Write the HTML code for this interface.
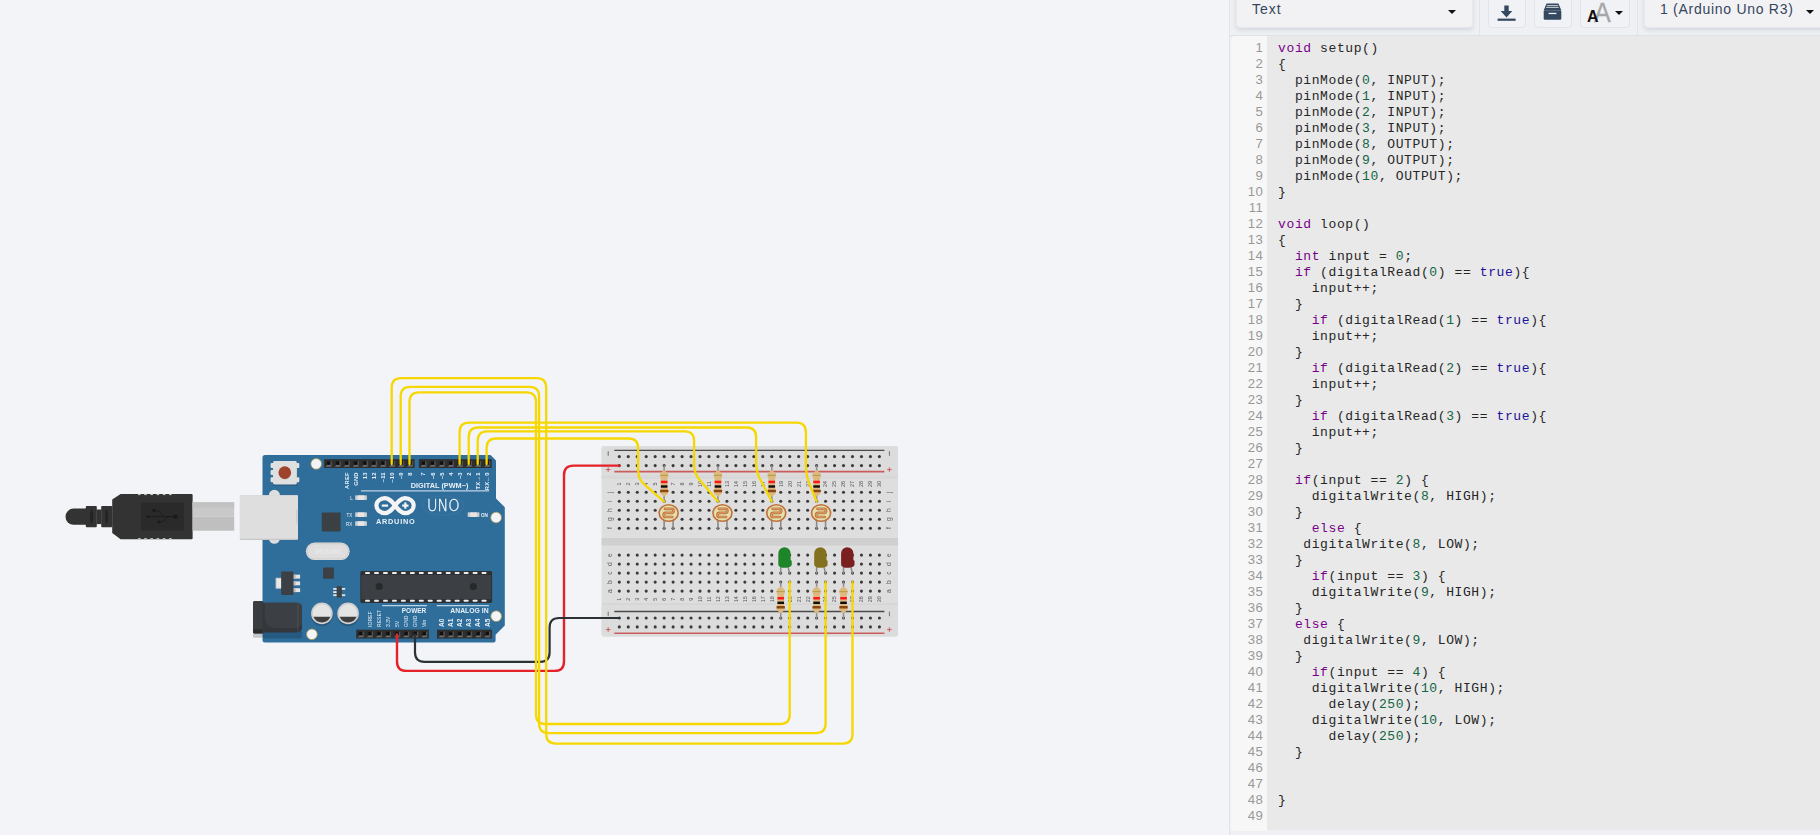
<!DOCTYPE html>
<html><head><meta charset="utf-8"><title>Circuit</title>
<style>
html,body{margin:0;padding:0;}
body{width:1820px;height:835px;overflow:hidden;background:#f3f4f7;position:relative;font-family:"Liberation Sans",sans-serif;}
#cv{position:absolute;left:0;top:0;will-change:transform;}
#panel{position:absolute;left:1229px;top:0;width:591px;height:835px;background:#eff0f3;border-left:1px solid #e1e4ea;box-sizing:border-box;}
#tb{position:absolute;left:0;top:0;width:590px;height:35px;border-bottom:1px solid #dde2e9;}
.dd{position:absolute;top:-12px;height:39.5px;background:#f2f2f5;border:1px solid #e6e8ed;border-radius:4px;box-shadow:0 2px 4px rgba(60,80,110,0.16);box-sizing:border-box;}
.ddt{position:absolute;top:11.2px;font-size:14px;line-height:18px;color:#35465c;white-space:nowrap;letter-spacing:0.4px;}
.car{position:absolute;top:21.3px;width:0;height:0;border-left:4.2px solid transparent;border-right:4.2px solid transparent;border-top:4.4px solid #111;}
.vs{position:absolute;top:0;width:1px;height:35px;background:#e1e5eb;}
.btn{position:absolute;top:-6px;height:34px;border:1px solid #e1e5eb;border-radius:4px;box-sizing:border-box;background:#f1f2f5;}
.btn svg{position:absolute;left:-0.6px;top:5.3px;}
.bigA{position:absolute;left:13px;top:4.7px;font-size:27px;line-height:27px;color:#a6a6a6;-webkit-text-stroke:0.35px #a6a6a6;transform:scaleX(0.93);transform-origin:0 0;}
.smA{position:absolute;left:6px;top:13.8px;font-size:16px;line-height:16px;color:#111;font-weight:bold;}
.btn .car{top:15.8px;}
#ed{position:absolute;left:1px;top:36px;width:589px;height:794px;background:#e9e9e9;}
#gut{position:absolute;left:0;top:0;width:36px;height:795px;background:#f7f7f7;border-radius:4px 0 0 3px;padding-top:4px;box-sizing:border-box;}
#gut div{height:16px;line-height:16px;font-size:13.2px;letter-spacing:0.5px;color:#999;text-align:right;padding-right:3.6px;}
#code{position:absolute;left:47.1px;top:5.2px;margin:0;font-family:"Liberation Mono",monospace;font-size:13px;letter-spacing:0.6px;line-height:16px;color:#262626;}
#code div{height:16px;white-space:pre;}
.k{color:#770088}.n{color:#116644}.a{color:#221199}
</style></head>
<body>
<svg id="cv" width="1229" height="835" viewBox="0 0 1229 835">
<g id="usb">
<path d="M86 508.6H73.6a8.1 8.1 0 0 0 0 16.2H86z" fill="#333"/>
<rect x="85.8" y="505.9" width="11" height="21.4" rx="1" fill="#333"/>
<rect x="96.5" y="509.5" width="5" height="14.6" fill="#333"/>
<rect x="101.2" y="505.9" width="11.2" height="21.4" rx="1" fill="#333"/>
<ellipse cx="91.6" cy="516.6" rx="1.6" ry="7.4" fill="#242424"/>
<ellipse cx="106.6" cy="516.6" rx="1.6" ry="7.4" fill="#242424"/>
<path d="M112.2 499.6L120.6 493.9H191.6a1 1 0 0 1 1 1V538.3a1 1 0 0 1 -1 1H120.6L112.2 533z" fill="#333"/>
<rect x="138" y="493.9" width="2.6" height="1.2" fill="#c4c4c4"/><rect x="138" y="538.1" width="2.6" height="1.2" fill="#c4c4c4"/>
<rect x="144.2" y="493.9" width="2.6" height="1.2" fill="#c4c4c4"/><rect x="144.2" y="538.1" width="2.6" height="1.2" fill="#c4c4c4"/>
<rect x="150.4" y="493.9" width="2.6" height="1.2" fill="#c4c4c4"/><rect x="150.4" y="538.1" width="2.6" height="1.2" fill="#c4c4c4"/>
<rect x="156.6" y="493.9" width="2.6" height="1.2" fill="#c4c4c4"/><rect x="156.6" y="538.1" width="2.6" height="1.2" fill="#c4c4c4"/>
<rect x="162.8" y="493.9" width="2.6" height="1.2" fill="#c4c4c4"/><rect x="162.8" y="538.1" width="2.6" height="1.2" fill="#c4c4c4"/>
<rect x="169" y="493.9" width="2.6" height="1.2" fill="#c4c4c4"/><rect x="169" y="538.1" width="2.6" height="1.2" fill="#c4c4c4"/>
<rect x="141" y="502.6" width="43" height="27.7" fill="#2a2a2a"/>
<g stroke="#1b1b1b" stroke-width="0.9" fill="none"><path d="M148 516.6H174"/><path d="M165.5 516.6C160.5 516.6 161.5 510.5 156 510.5"/><path d="M170.5 516.6C165.5 516.6 166 521.8 160.5 521.8"/></g>
<circle cx="175.4" cy="516.6" r="2.4" fill="#1b1b1b"/><path d="M145.8 516.6l3.6-1.9v3.8z" fill="#1b1b1b"/><rect x="152.6" y="509" width="3" height="3" fill="#1b1b1b"/><circle cx="158.9" cy="521.8" r="1.6" fill="#1b1b1b"/>
<rect x="192.6" y="502.2" width="41.6" height="14.4" fill="#c9c9c9"/><rect x="192.6" y="516.6" width="41.6" height="14.1" fill="#bfbfbf"/>
<rect x="192.6" y="502.2" width="41.6" height="5.4" fill="#c2c2c2"/>
</g>
<path d="M265 455H490.6L496 460.4V498.4L504.8 507.2V625.6L495.6 634.8V640.5a2 2 0 0 1 -2 2H265a2.5 2.5 0 0 1 -2.5 -2.5V457.5a2.5 2.5 0 0 1 2.5 -2.5z" fill="#2f6d9b"/>
<circle cx="316.2" cy="463.9" r="5.4" fill="#f3f4f7" stroke="#a3924d" stroke-width="0.8"/>
<circle cx="496.1" cy="517.5" r="5.4" fill="#f3f4f7" stroke="#a3924d" stroke-width="0.8"/>
<circle cx="496.2" cy="616.2" r="5.4" fill="#f3f4f7" stroke="#a3924d" stroke-width="0.8"/>
<circle cx="311.9" cy="634.3" r="5.4" fill="#f3f4f7" stroke="#a3924d" stroke-width="0.8"/>
<rect x="273.2" y="483" width="23.6" height="2.6" rx="1.2" fill="#24577e"/>
<rect x="270.6" y="462.9" width="3" height="5.1" rx="1" fill="#e3e3e3"/>
<rect x="270.6" y="470" width="3" height="5.1" rx="1" fill="#e3e3e3"/>
<rect x="270.6" y="477.2" width="3" height="5.1" rx="1" fill="#e3e3e3"/>
<rect x="296.3" y="462.9" width="3" height="5.1" rx="1" fill="#e3e3e3"/>
<rect x="296.3" y="477.2" width="3" height="5.1" rx="1" fill="#e3e3e3"/>
<rect x="273" y="461.1" width="23.9" height="23.3" rx="1.6" fill="#dfdfdf"/>
<circle cx="284.8" cy="473.1" r="6.3" fill="#8f8f8f" opacity="0.5"/>
<circle cx="284.8" cy="472.6" r="6.3" fill="#a0432c"/>
<circle cx="274.4" cy="495.4" r="5.6" fill="#dedede"/><circle cx="274.4" cy="538.4" r="5.4" fill="#dedede"/>
<rect x="239.9" y="495.3" width="58.1" height="44.6" rx="0.8" fill="#c6c7c9"/>
<rect x="239.9" y="495.3" width="58.1" height="43.4" rx="0.8" fill="#dedede"/>
<rect x="296.4" y="509.5" width="0.9" height="14" fill="#c4c4c4"/>
<rect x="321.8" y="512.4" width="18.8" height="19" rx="0.8" fill="#3b4045"/>
<rect x="305.9" y="542.6" width="43.8" height="17.4" rx="8.7" fill="#e3e1df"/>
<rect x="307" y="543.7" width="41.6" height="15.2" rx="7.6" fill="#dedede" stroke="#c8c5c2" stroke-width="0.7"/>
<text x="314.7" y="553.8" font-family="Liberation Sans, sans-serif" font-size="7" font-weight="bold" fill="#e9e9e9" textLength="26.2" lengthAdjust="spacingAndGlyphs">SPK16.000G</text>
<rect x="323.1" y="567.6" width="10.8" height="11.1" rx="0.5" fill="#3b4045"/>
<rect x="336.6" y="586.2" width="5.3" height="11.2" rx="0.5" fill="#3b4045"/>
<rect x="333.2" y="588" width="3.4" height="1.8" fill="#e6e6e6"/>
<rect x="333.2" y="591.2" width="3.4" height="1.8" fill="#e6e6e6"/>
<rect x="333.2" y="594.3" width="3.4" height="1.8" fill="#e6e6e6"/>
<rect x="341.9" y="588" width="3.3" height="1.8" fill="#e6e6e6"/>
<rect x="341.9" y="594.3" width="3.3" height="1.8" fill="#e6e6e6"/>
<rect x="275.6" y="577.7" width="6" height="11" rx="0.8" fill="#c9c9c9"/><rect x="276.6" y="578.7" width="4.6" height="9" fill="#e9e9e9"/>
<rect x="293.3" y="574.7" width="6.8" height="3.9" fill="#e4e4e4"/><rect x="293.3" y="574.7" width="2.4" height="3.9" fill="#bdbdbd"/>
<rect x="293.3" y="581.4" width="6.8" height="3.9" fill="#e4e4e4"/><rect x="293.3" y="581.4" width="2.4" height="3.9" fill="#bdbdbd"/>
<rect x="293.3" y="588.2" width="6.8" height="3.9" fill="#e4e4e4"/><rect x="293.3" y="588.2" width="2.4" height="3.9" fill="#bdbdbd"/>
<rect x="281.2" y="571.5" width="12.3" height="23.4" rx="0.6" fill="#3b4045"/>
<rect x="253" y="633.5" width="9.6" height="4.3" rx="1" fill="#c4c6c9"/>
<rect x="262.6" y="630" width="39.3" height="8.4" rx="2" fill="#255a83"/>
<rect x="253" y="601.1" width="10.4" height="32.4" rx="1.4" fill="#3a3d40"/>
<rect x="253" y="629.2" width="10.4" height="4.3" rx="1.2" fill="#2a2c2e"/>
<path d="M262.6 602.8H297a5 5 0 0 1 5 5V627.5a5 5 0 0 1 -5 5H262.6z" fill="#33363a"/>
<path d="M264.8 602.8H297a5 5 0 0 1 5 5V622a6 6 0 0 1 -6 6H274a9.2 9.2 0 0 1 -9.2 -9.2z" fill="#3c4044"/>
<rect x="297.6" y="603" width="0.6" height="29.2" fill="#55595d"/>
<ellipse cx="321.9" cy="616.3" rx="10.6" ry="10" fill="#24577e"/>
<circle cx="321.9" cy="613.4" r="10.8" fill="#cfcfcf"/>
<circle cx="321.9" cy="613.4" r="9.1" fill="#e4e4e4"/>
<path d="M313.45 616.8H330.35A9.1 9.1 0 0 1 313.45 616.8z" fill="#3e3e3e"/>
<ellipse cx="348.1" cy="616.3" rx="10.6" ry="10" fill="#24577e"/>
<circle cx="348.1" cy="613.4" r="10.8" fill="#cfcfcf"/>
<circle cx="348.1" cy="613.4" r="9.1" fill="#e4e4e4"/>
<path d="M339.65 616.8H356.55A9.1 9.1 0 0 1 339.65 616.8z" fill="#3e3e3e"/>
<rect x="324.1" y="459.2" width="90.5" height="8.8" fill="#2f2f2f"/>
<path d="M325.52 466.8L327.12 464.8H330.23L331.73 466.8z" fill="#6c6c6c"/>
<path d="M331.73 460.5L330.23 461.6V464.8L331.73 466.8z" fill="#545454"/>
<path d="M325.52 460.5H331.73L330.23 461.6H327.12V464.8L325.52 466.8z" fill="#292929"/>
<rect x="327.12" y="461.6" width="3.1" height="3.2" fill="#0e0e0e"/>
<path d="M334.57 466.8L336.18 464.8H339.28L340.78 466.8z" fill="#6c6c6c"/>
<path d="M340.78 460.5L339.28 461.6V464.8L340.78 466.8z" fill="#545454"/>
<path d="M334.57 460.5H340.78L339.28 461.6H336.18V464.8L334.57 466.8z" fill="#292929"/>
<rect x="336.18" y="461.6" width="3.1" height="3.2" fill="#0e0e0e"/>
<path d="M343.62 466.8L345.23 464.8H348.33L349.83 466.8z" fill="#6c6c6c"/>
<path d="M349.83 460.5L348.33 461.6V464.8L349.83 466.8z" fill="#545454"/>
<path d="M343.62 460.5H349.83L348.33 461.6H345.23V464.8L343.62 466.8z" fill="#292929"/>
<rect x="345.23" y="461.6" width="3.1" height="3.2" fill="#0e0e0e"/>
<path d="M352.67 466.8L354.27 464.8H357.38L358.88 466.8z" fill="#6c6c6c"/>
<path d="M358.88 460.5L357.38 461.6V464.8L358.88 466.8z" fill="#545454"/>
<path d="M352.67 460.5H358.88L357.38 461.6H354.27V464.8L352.67 466.8z" fill="#292929"/>
<rect x="354.27" y="461.6" width="3.1" height="3.2" fill="#0e0e0e"/>
<path d="M361.72 466.8L363.32 464.8H366.43L367.93 466.8z" fill="#6c6c6c"/>
<path d="M367.93 460.5L366.43 461.6V464.8L367.93 466.8z" fill="#545454"/>
<path d="M361.72 460.5H367.93L366.43 461.6H363.32V464.8L361.72 466.8z" fill="#292929"/>
<rect x="363.32" y="461.6" width="3.1" height="3.2" fill="#0e0e0e"/>
<path d="M370.77 466.8L372.38 464.8H375.48L376.98 466.8z" fill="#6c6c6c"/>
<path d="M376.98 460.5L375.48 461.6V464.8L376.98 466.8z" fill="#545454"/>
<path d="M370.77 460.5H376.98L375.48 461.6H372.38V464.8L370.77 466.8z" fill="#292929"/>
<rect x="372.38" y="461.6" width="3.1" height="3.2" fill="#0e0e0e"/>
<path d="M379.82 466.8L381.43 464.8H384.53L386.03 466.8z" fill="#6c6c6c"/>
<path d="M386.03 460.5L384.53 461.6V464.8L386.03 466.8z" fill="#545454"/>
<path d="M379.82 460.5H386.03L384.53 461.6H381.43V464.8L379.82 466.8z" fill="#292929"/>
<rect x="381.43" y="461.6" width="3.1" height="3.2" fill="#0e0e0e"/>
<path d="M388.88 466.8L390.48 464.8H393.58L395.08 466.8z" fill="#6c6c6c"/>
<path d="M395.08 460.5L393.58 461.6V464.8L395.08 466.8z" fill="#545454"/>
<path d="M388.88 460.5H395.08L393.58 461.6H390.48V464.8L388.88 466.8z" fill="#292929"/>
<rect x="390.48" y="461.6" width="3.1" height="3.2" fill="#0e0e0e"/>
<path d="M397.92 466.8L399.52 464.8H402.62L404.12 466.8z" fill="#6c6c6c"/>
<path d="M404.12 460.5L402.62 461.6V464.8L404.12 466.8z" fill="#545454"/>
<path d="M397.92 460.5H404.12L402.62 461.6H399.52V464.8L397.92 466.8z" fill="#292929"/>
<rect x="399.52" y="461.6" width="3.1" height="3.2" fill="#0e0e0e"/>
<path d="M406.97 466.8L408.57 464.8H411.68L413.18 466.8z" fill="#6c6c6c"/>
<path d="M413.18 460.5L411.68 461.6V464.8L413.18 466.8z" fill="#545454"/>
<path d="M406.97 460.5H413.18L411.68 461.6H408.57V464.8L406.97 466.8z" fill="#292929"/>
<rect x="408.57" y="461.6" width="3.1" height="3.2" fill="#0e0e0e"/>
<rect x="418.9" y="459.2" width="72.8" height="8.8" fill="#2f2f2f"/>
<path d="M420.35 466.8L421.95 464.8H425.05L426.55 466.8z" fill="#6c6c6c"/>
<path d="M426.55 460.5L425.05 461.6V464.8L426.55 466.8z" fill="#545454"/>
<path d="M420.35 460.5H426.55L425.05 461.6H421.95V464.8L420.35 466.8z" fill="#292929"/>
<rect x="421.95" y="461.6" width="3.1" height="3.2" fill="#0e0e0e"/>
<path d="M429.45 466.8L431.05 464.8H434.15L435.65 466.8z" fill="#6c6c6c"/>
<path d="M435.65 460.5L434.15 461.6V464.8L435.65 466.8z" fill="#545454"/>
<path d="M429.45 460.5H435.65L434.15 461.6H431.05V464.8L429.45 466.8z" fill="#292929"/>
<rect x="431.05" y="461.6" width="3.1" height="3.2" fill="#0e0e0e"/>
<path d="M438.55 466.8L440.15 464.8H443.25L444.75 466.8z" fill="#6c6c6c"/>
<path d="M444.75 460.5L443.25 461.6V464.8L444.75 466.8z" fill="#545454"/>
<path d="M438.55 460.5H444.75L443.25 461.6H440.15V464.8L438.55 466.8z" fill="#292929"/>
<rect x="440.15" y="461.6" width="3.1" height="3.2" fill="#0e0e0e"/>
<path d="M447.65 466.8L449.25 464.8H452.35L453.85 466.8z" fill="#6c6c6c"/>
<path d="M453.85 460.5L452.35 461.6V464.8L453.85 466.8z" fill="#545454"/>
<path d="M447.65 460.5H453.85L452.35 461.6H449.25V464.8L447.65 466.8z" fill="#292929"/>
<rect x="449.25" y="461.6" width="3.1" height="3.2" fill="#0e0e0e"/>
<path d="M456.75 466.8L458.35 464.8H461.45L462.95 466.8z" fill="#6c6c6c"/>
<path d="M462.95 460.5L461.45 461.6V464.8L462.95 466.8z" fill="#545454"/>
<path d="M456.75 460.5H462.95L461.45 461.6H458.35V464.8L456.75 466.8z" fill="#292929"/>
<rect x="458.35" y="461.6" width="3.1" height="3.2" fill="#0e0e0e"/>
<path d="M465.85 466.8L467.45 464.8H470.55L472.05 466.8z" fill="#6c6c6c"/>
<path d="M472.05 460.5L470.55 461.6V464.8L472.05 466.8z" fill="#545454"/>
<path d="M465.85 460.5H472.05L470.55 461.6H467.45V464.8L465.85 466.8z" fill="#292929"/>
<rect x="467.45" y="461.6" width="3.1" height="3.2" fill="#0e0e0e"/>
<path d="M474.95 466.8L476.55 464.8H479.65L481.15 466.8z" fill="#6c6c6c"/>
<path d="M481.15 460.5L479.65 461.6V464.8L481.15 466.8z" fill="#545454"/>
<path d="M474.95 460.5H481.15L479.65 461.6H476.55V464.8L474.95 466.8z" fill="#292929"/>
<rect x="476.55" y="461.6" width="3.1" height="3.2" fill="#0e0e0e"/>
<path d="M484.05 466.8L485.65 464.8H488.75L490.25 466.8z" fill="#6c6c6c"/>
<path d="M490.25 460.5L488.75 461.6V464.8L490.25 466.8z" fill="#545454"/>
<path d="M484.05 460.5H490.25L488.75 461.6H485.65V464.8L484.05 466.8z" fill="#292929"/>
<rect x="485.65" y="461.6" width="3.1" height="3.2" fill="#0e0e0e"/>
<rect x="356.2" y="629.7" width="72.64" height="8.8" fill="#2f2f2f"/>
<path d="M357.64 637.3L359.24 635.3H362.34L363.84 637.3z" fill="#6c6c6c"/>
<path d="M363.84 631L362.34 632.1V635.3L363.84 637.3z" fill="#545454"/>
<path d="M357.64 631H363.84L362.34 632.1H359.24V635.3L357.64 637.3z" fill="#292929"/>
<rect x="359.24" y="632.1" width="3.1" height="3.2" fill="#0e0e0e"/>
<path d="M366.72 637.3L368.32 635.3H371.42L372.92 637.3z" fill="#6c6c6c"/>
<path d="M372.92 631L371.42 632.1V635.3L372.92 637.3z" fill="#545454"/>
<path d="M366.72 631H372.92L371.42 632.1H368.32V635.3L366.72 637.3z" fill="#292929"/>
<rect x="368.32" y="632.1" width="3.1" height="3.2" fill="#0e0e0e"/>
<path d="M375.8 637.3L377.4 635.3H380.5L382 637.3z" fill="#6c6c6c"/>
<path d="M382 631L380.5 632.1V635.3L382 637.3z" fill="#545454"/>
<path d="M375.8 631H382L380.5 632.1H377.4V635.3L375.8 637.3z" fill="#292929"/>
<rect x="377.4" y="632.1" width="3.1" height="3.2" fill="#0e0e0e"/>
<path d="M384.88 637.3L386.48 635.3H389.58L391.08 637.3z" fill="#6c6c6c"/>
<path d="M391.08 631L389.58 632.1V635.3L391.08 637.3z" fill="#545454"/>
<path d="M384.88 631H391.08L389.58 632.1H386.48V635.3L384.88 637.3z" fill="#292929"/>
<rect x="386.48" y="632.1" width="3.1" height="3.2" fill="#0e0e0e"/>
<path d="M393.96 637.3L395.56 635.3H398.66L400.16 637.3z" fill="#6c6c6c"/>
<path d="M400.16 631L398.66 632.1V635.3L400.16 637.3z" fill="#545454"/>
<path d="M393.96 631H400.16L398.66 632.1H395.56V635.3L393.96 637.3z" fill="#292929"/>
<rect x="395.56" y="632.1" width="3.1" height="3.2" fill="#0e0e0e"/>
<path d="M403.04 637.3L404.64 635.3H407.74L409.24 637.3z" fill="#6c6c6c"/>
<path d="M409.24 631L407.74 632.1V635.3L409.24 637.3z" fill="#545454"/>
<path d="M403.04 631H409.24L407.74 632.1H404.64V635.3L403.04 637.3z" fill="#292929"/>
<rect x="404.64" y="632.1" width="3.1" height="3.2" fill="#0e0e0e"/>
<path d="M412.12 637.3L413.72 635.3H416.82L418.32 637.3z" fill="#6c6c6c"/>
<path d="M418.32 631L416.82 632.1V635.3L418.32 637.3z" fill="#545454"/>
<path d="M412.12 631H418.32L416.82 632.1H413.72V635.3L412.12 637.3z" fill="#292929"/>
<rect x="413.72" y="632.1" width="3.1" height="3.2" fill="#0e0e0e"/>
<path d="M421.2 637.3L422.8 635.3H425.9L427.4 637.3z" fill="#6c6c6c"/>
<path d="M427.4 631L425.9 632.1V635.3L427.4 637.3z" fill="#545454"/>
<path d="M421.2 631H427.4L425.9 632.1H422.8V635.3L421.2 637.3z" fill="#292929"/>
<rect x="422.8" y="632.1" width="3.1" height="3.2" fill="#0e0e0e"/>
<rect x="437" y="629.7" width="54.9" height="8.8" fill="#2f2f2f"/>
<path d="M438.47 637.3L440.07 635.3H443.18L444.68 637.3z" fill="#6c6c6c"/>
<path d="M444.68 631L443.18 632.1V635.3L444.68 637.3z" fill="#545454"/>
<path d="M438.47 631H444.68L443.18 632.1H440.07V635.3L438.47 637.3z" fill="#292929"/>
<rect x="440.07" y="632.1" width="3.1" height="3.2" fill="#0e0e0e"/>
<path d="M447.62 637.3L449.22 635.3H452.32L453.82 637.3z" fill="#6c6c6c"/>
<path d="M453.82 631L452.32 632.1V635.3L453.82 637.3z" fill="#545454"/>
<path d="M447.62 631H453.82L452.32 632.1H449.22V635.3L447.62 637.3z" fill="#292929"/>
<rect x="449.22" y="632.1" width="3.1" height="3.2" fill="#0e0e0e"/>
<path d="M456.77 637.3L458.38 635.3H461.48L462.98 637.3z" fill="#6c6c6c"/>
<path d="M462.98 631L461.48 632.1V635.3L462.98 637.3z" fill="#545454"/>
<path d="M456.77 631H462.98L461.48 632.1H458.38V635.3L456.77 637.3z" fill="#292929"/>
<rect x="458.38" y="632.1" width="3.1" height="3.2" fill="#0e0e0e"/>
<path d="M465.92 637.3L467.52 635.3H470.62L472.12 637.3z" fill="#6c6c6c"/>
<path d="M472.12 631L470.62 632.1V635.3L472.12 637.3z" fill="#545454"/>
<path d="M465.92 631H472.12L470.62 632.1H467.52V635.3L465.92 637.3z" fill="#292929"/>
<rect x="467.52" y="632.1" width="3.1" height="3.2" fill="#0e0e0e"/>
<path d="M475.07 637.3L476.68 635.3H479.78L481.28 637.3z" fill="#6c6c6c"/>
<path d="M481.28 631L479.78 632.1V635.3L481.28 637.3z" fill="#545454"/>
<path d="M475.07 631H481.28L479.78 632.1H476.68V635.3L475.07 637.3z" fill="#292929"/>
<rect x="476.68" y="632.1" width="3.1" height="3.2" fill="#0e0e0e"/>
<path d="M484.22 637.3L485.82 635.3H488.93L490.43 637.3z" fill="#6c6c6c"/>
<path d="M490.43 631L488.93 632.1V635.3L490.43 637.3z" fill="#545454"/>
<path d="M484.22 631H490.43L488.93 632.1H485.82V635.3L484.22 637.3z" fill="#292929"/>
<rect x="485.82" y="632.1" width="3.1" height="3.2" fill="#0e0e0e"/>
<rect x="360.3" y="571.1" width="131.8" height="31.8" rx="1.6" fill="#2e3134"/>
<rect x="361.4" y="575" width="129.6" height="24" fill="#3c4044"/>
<rect x="365.2" y="572.1" width="4.6" height="2" rx="0.4" fill="#ededed"/><rect x="365.2" y="599.8" width="4.6" height="2" rx="0.4" fill="#ededed"/>
<rect x="374.16" y="572.1" width="4.6" height="2" rx="0.4" fill="#ededed"/><rect x="374.16" y="599.8" width="4.6" height="2" rx="0.4" fill="#ededed"/>
<rect x="383.13" y="572.1" width="4.6" height="2" rx="0.4" fill="#ededed"/><rect x="383.13" y="599.8" width="4.6" height="2" rx="0.4" fill="#ededed"/>
<rect x="392.09" y="572.1" width="4.6" height="2" rx="0.4" fill="#ededed"/><rect x="392.09" y="599.8" width="4.6" height="2" rx="0.4" fill="#ededed"/>
<rect x="401.06" y="572.1" width="4.6" height="2" rx="0.4" fill="#ededed"/><rect x="401.06" y="599.8" width="4.6" height="2" rx="0.4" fill="#ededed"/>
<rect x="410.02" y="572.1" width="4.6" height="2" rx="0.4" fill="#ededed"/><rect x="410.02" y="599.8" width="4.6" height="2" rx="0.4" fill="#ededed"/>
<rect x="418.99" y="572.1" width="4.6" height="2" rx="0.4" fill="#ededed"/><rect x="418.99" y="599.8" width="4.6" height="2" rx="0.4" fill="#ededed"/>
<rect x="427.95" y="572.1" width="4.6" height="2" rx="0.4" fill="#ededed"/><rect x="427.95" y="599.8" width="4.6" height="2" rx="0.4" fill="#ededed"/>
<rect x="436.92" y="572.1" width="4.6" height="2" rx="0.4" fill="#ededed"/><rect x="436.92" y="599.8" width="4.6" height="2" rx="0.4" fill="#ededed"/>
<rect x="445.88" y="572.1" width="4.6" height="2" rx="0.4" fill="#ededed"/><rect x="445.88" y="599.8" width="4.6" height="2" rx="0.4" fill="#ededed"/>
<rect x="454.85" y="572.1" width="4.6" height="2" rx="0.4" fill="#ededed"/><rect x="454.85" y="599.8" width="4.6" height="2" rx="0.4" fill="#ededed"/>
<rect x="463.81" y="572.1" width="4.6" height="2" rx="0.4" fill="#ededed"/><rect x="463.81" y="599.8" width="4.6" height="2" rx="0.4" fill="#ededed"/>
<rect x="472.78" y="572.1" width="4.6" height="2" rx="0.4" fill="#ededed"/><rect x="472.78" y="599.8" width="4.6" height="2" rx="0.4" fill="#ededed"/>
<rect x="481.75" y="572.1" width="4.6" height="2" rx="0.4" fill="#ededed"/><rect x="481.75" y="599.8" width="4.6" height="2" rx="0.4" fill="#ededed"/>
<circle cx="379.2" cy="586.5" r="3.6" fill="#26282a"/><circle cx="473.3" cy="586.5" r="3.6" fill="#26282a"/>
<rect x="355.2" y="495.4" width="11.7" height="4.5" fill="#cfcfcf"/><rect x="357.8" y="495.4" width="6.5" height="4.5" fill="#e6e6e6"/>
<rect x="355.2" y="512.4" width="11.7" height="4.5" fill="#cfcfcf"/><rect x="357.8" y="512.4" width="6.5" height="4.5" fill="#e6e6e6"/>
<rect x="355.2" y="521.3" width="11.7" height="4.5" fill="#cfcfcf"/><rect x="357.8" y="521.3" width="6.5" height="4.5" fill="#e6e6e6"/>
<rect x="467.7" y="512.4" width="11.7" height="4.5" fill="#cfcfcf"/><rect x="470.3" y="512.4" width="6.5" height="4.5" fill="#e6e6e6"/>
<g font-family="Liberation Sans, sans-serif" fill="#e8f0f6">
<text x="352.8" y="499.6" font-size="4.6" text-anchor="end">L</text>
<text x="352.4" y="516.6" font-size="4.6" text-anchor="end">TX</text>
<text x="352.4" y="525.6" font-size="4.6" text-anchor="end">RX</text>
<text x="481" y="516.6" font-size="4.6" font-weight="bold">ON</text>
<text x="410.8" y="487.7" font-size="6.8" font-weight="bold" textLength="57.6" lengthAdjust="spacingAndGlyphs">DIGITAL (PWM~)</text>
<text x="401.8" y="613.1" font-size="6.8" font-weight="bold" textLength="24.5" lengthAdjust="spacingAndGlyphs">POWER</text>
<text x="450.3" y="613.1" font-size="6.8" font-weight="bold" textLength="38.3" lengthAdjust="spacingAndGlyphs">ANALOG IN</text>
<text x="375.9" y="523.7" font-size="7.3" font-weight="bold" textLength="38.8" lengthAdjust="spacing">ARDUINO</text>
</g>
<text x="426.9" y="511.4" font-family="DejaVu Sans Light, DejaVu Sans, Liberation Sans, sans-serif" font-weight="200" font-size="15.8" fill="#f4f7fa" stroke="#f4f7fa" stroke-width="0.35" textLength="32.7" lengthAdjust="spacingAndGlyphs">UNO</text>
<ellipse cx="442.9" cy="505.6" rx="20.8" ry="9.6" fill="none" stroke="#5f8fb5" stroke-width="0.5" stroke-dasharray="1 1"/>
<g stroke="#bfd3e3" stroke-width="1.3"><path d="M361 490.8H489.1"/><path d="M382.2 605.6H426.9"/><path d="M436.7 605.6H488.9"/></g>
<path d="M395.05 505.5C392 501.5 389.4 498.1 385 498.1C380.2 498.1 376.4 501.4 376.4 505.5C376.4 509.6 380.2 513.1 385 513.1C389.4 513.1 392 509.5 395.05 505.5C398.1 501.5 400.7 498.1 405.1 498.1C409.9 498.1 413.7 501.4 413.7 505.5C413.7 509.6 409.9 513.1 405.1 513.1C400.7 513.1 398.1 509.5 395.05 505.5z" fill="none" stroke="#f4f4f4" stroke-width="4.2"/>
<rect x="381.8" y="504.5" width="6.3" height="2.2" fill="#f4f4f4"/><rect x="402.2" y="504.5" width="6.3" height="2.2" fill="#f4f4f4"/><rect x="404.25" y="502.4" width="2.2" height="6.3" fill="#f4f4f4"/>
<g font-family="Liberation Sans, sans-serif" fill="#e8f0f6" font-size="5.8" font-weight="bold" letter-spacing="0.2">
<text transform="translate(348.7 472.3) rotate(-90)" text-anchor="end">AREF</text>
<text transform="translate(357.75 472.3) rotate(-90)" text-anchor="end">GND</text>
<text transform="translate(366.8 472.3) rotate(-90)" text-anchor="end">13</text>
<text transform="translate(375.85 472.3) rotate(-90)" text-anchor="end">12</text>
<text transform="translate(384.9 472.3) rotate(-90)" text-anchor="end">~11</text>
<text transform="translate(393.95 472.3) rotate(-90)" text-anchor="end">~10</text>
<text transform="translate(403 472.3) rotate(-90)" text-anchor="end">~9</text>
<text transform="translate(412.05 472.3) rotate(-90)" text-anchor="end">8</text>
<text transform="translate(425.45 472.3) rotate(-90)" text-anchor="end">7</text>
<text transform="translate(434.55 472.3) rotate(-90)" text-anchor="end">~6</text>
<text transform="translate(443.65 472.3) rotate(-90)" text-anchor="end">~5</text>
<text transform="translate(452.75 472.3) rotate(-90)" text-anchor="end">4</text>
<text transform="translate(461.85 472.3) rotate(-90)" text-anchor="end">~3</text>
<text transform="translate(470.95 472.3) rotate(-90)" text-anchor="end">2</text>
<text transform="translate(480.05 472.3) rotate(-90)" text-anchor="end" font-weight="bold">TX→1</text>
<text transform="translate(489.15 472.3) rotate(-90)" text-anchor="end" font-weight="bold">RX←0</text>
</g>
<g font-family="Liberation Sans, sans-serif" fill="#e8f0f6" font-size="5.1">
<text transform="translate(371.62 627) rotate(-90)">IOREF</text>
<text transform="translate(380.7 627) rotate(-90)">RESET</text>
<text transform="translate(389.78 627) rotate(-90)">3.3V</text>
<text transform="translate(398.86 627) rotate(-90)">5V</text>
<text transform="translate(407.94 627) rotate(-90)">GND</text>
<text transform="translate(417.02 627) rotate(-90)">GND</text>
<text transform="translate(426.1 627) rotate(-90)">Vin</text>
</g>
<g font-family="Liberation Sans, sans-serif" fill="#e8f0f6" font-size="6.5" font-weight="bold">
<text transform="translate(443.87 627) rotate(-90)">A0</text>
<text transform="translate(453.02 627) rotate(-90)">A1</text>
<text transform="translate(462.17 627) rotate(-90)">A2</text>
<text transform="translate(471.32 627) rotate(-90)">A3</text>
<text transform="translate(480.47 627) rotate(-90)">A4</text>
<text transform="translate(489.62 627) rotate(-90)">A5</text>
</g>
<rect x="601.6" y="446.2" width="296.4" height="190.3" rx="2" fill="#dedede"/>
<rect x="601.6" y="446.2" width="296.4" height="32" rx="2" fill="#dcdcdc"/>
<rect x="601.6" y="475.6" width="296.4" height="3.4" fill="#d8d8d8"/>
<rect x="601.6" y="538" width="296.4" height="7.6" fill="#cfcfcf"/>
<rect x="601.6" y="603.4" width="296.4" height="1.4" fill="#d3d3d3"/>
<rect x="601.6" y="604.8" width="296.4" height="31.7" rx="2" fill="#dcdcdc"/>
<g stroke-width="1.3"><path d="M614.3 450.4H884.4" stroke="#4a4a4a"/><path d="M614.3 471.6H884.4" stroke="#cb5c5c" stroke-width="1.6"/><path d="M614.3 611.5H884.4" stroke="#4a4a4a"/><path d="M614.3 633.3H884.4" stroke="#cb5c5c" stroke-width="1.6"/></g>
<path d="M608.2 451.2V455.8M608.2 611.6V616.2" stroke="#555" stroke-width="0.8"/>
<path d="M605.9000000000001 469.6H610.5M608.2 467.3V471.9M605.9000000000001 629.6H610.5M608.2 627.3V631.9" stroke="#cc4444" stroke-width="0.8"/>
<path d="M889.4 451.2V455.8M889.4 611.6V616.2" stroke="#555" stroke-width="0.8"/>
<path d="M887.1 469.6H891.6999999999999M889.4 467.3V471.9M887.1 629.6H891.6999999999999M889.4 627.3V631.9" stroke="#cc4444" stroke-width="0.8"/>
<g fill="#3a3a3a">
<circle cx="619.3" cy="456.6" r="1.55"/>
<circle cx="628.27" cy="456.6" r="1.55"/>
<circle cx="637.24" cy="456.6" r="1.55"/>
<circle cx="646.21" cy="456.6" r="1.55"/>
<circle cx="655.18" cy="456.6" r="1.55"/>
<circle cx="664.14" cy="456.6" r="1.55"/>
<circle cx="673.11" cy="456.6" r="1.55"/>
<circle cx="682.08" cy="456.6" r="1.55"/>
<circle cx="691.05" cy="456.6" r="1.55"/>
<circle cx="700.02" cy="456.6" r="1.55"/>
<circle cx="708.99" cy="456.6" r="1.55"/>
<circle cx="717.96" cy="456.6" r="1.55"/>
<circle cx="726.93" cy="456.6" r="1.55"/>
<circle cx="735.9" cy="456.6" r="1.55"/>
<circle cx="744.87" cy="456.6" r="1.55"/>
<circle cx="753.83" cy="456.6" r="1.55"/>
<circle cx="762.8" cy="456.6" r="1.55"/>
<circle cx="771.77" cy="456.6" r="1.55"/>
<circle cx="780.74" cy="456.6" r="1.55"/>
<circle cx="789.71" cy="456.6" r="1.55"/>
<circle cx="798.68" cy="456.6" r="1.55"/>
<circle cx="807.65" cy="456.6" r="1.55"/>
<circle cx="816.62" cy="456.6" r="1.55"/>
<circle cx="825.59" cy="456.6" r="1.55"/>
<circle cx="834.56" cy="456.6" r="1.55"/>
<circle cx="843.52" cy="456.6" r="1.55"/>
<circle cx="852.49" cy="456.6" r="1.55"/>
<circle cx="861.46" cy="456.6" r="1.55"/>
<circle cx="870.43" cy="456.6" r="1.55"/>
<circle cx="879.4" cy="456.6" r="1.55"/>
<circle cx="619.3" cy="465.6" r="1.55"/>
<circle cx="628.27" cy="465.6" r="1.55"/>
<circle cx="637.24" cy="465.6" r="1.55"/>
<circle cx="646.21" cy="465.6" r="1.55"/>
<circle cx="655.18" cy="465.6" r="1.55"/>
<circle cx="664.14" cy="465.6" r="1.55"/>
<circle cx="673.11" cy="465.6" r="1.55"/>
<circle cx="682.08" cy="465.6" r="1.55"/>
<circle cx="691.05" cy="465.6" r="1.55"/>
<circle cx="700.02" cy="465.6" r="1.55"/>
<circle cx="708.99" cy="465.6" r="1.55"/>
<circle cx="717.96" cy="465.6" r="1.55"/>
<circle cx="726.93" cy="465.6" r="1.55"/>
<circle cx="735.9" cy="465.6" r="1.55"/>
<circle cx="744.87" cy="465.6" r="1.55"/>
<circle cx="753.83" cy="465.6" r="1.55"/>
<circle cx="762.8" cy="465.6" r="1.55"/>
<circle cx="771.77" cy="465.6" r="1.55"/>
<circle cx="780.74" cy="465.6" r="1.55"/>
<circle cx="789.71" cy="465.6" r="1.55"/>
<circle cx="798.68" cy="465.6" r="1.55"/>
<circle cx="807.65" cy="465.6" r="1.55"/>
<circle cx="816.62" cy="465.6" r="1.55"/>
<circle cx="825.59" cy="465.6" r="1.55"/>
<circle cx="834.56" cy="465.6" r="1.55"/>
<circle cx="843.52" cy="465.6" r="1.55"/>
<circle cx="852.49" cy="465.6" r="1.55"/>
<circle cx="861.46" cy="465.6" r="1.55"/>
<circle cx="870.43" cy="465.6" r="1.55"/>
<circle cx="879.4" cy="465.6" r="1.55"/>
<circle cx="619.3" cy="492.3" r="1.55"/>
<circle cx="628.27" cy="492.3" r="1.55"/>
<circle cx="637.24" cy="492.3" r="1.55"/>
<circle cx="646.21" cy="492.3" r="1.55"/>
<circle cx="655.18" cy="492.3" r="1.55"/>
<circle cx="664.14" cy="492.3" r="1.55"/>
<circle cx="673.11" cy="492.3" r="1.55"/>
<circle cx="682.08" cy="492.3" r="1.55"/>
<circle cx="691.05" cy="492.3" r="1.55"/>
<circle cx="700.02" cy="492.3" r="1.55"/>
<circle cx="708.99" cy="492.3" r="1.55"/>
<circle cx="717.96" cy="492.3" r="1.55"/>
<circle cx="726.93" cy="492.3" r="1.55"/>
<circle cx="735.9" cy="492.3" r="1.55"/>
<circle cx="744.87" cy="492.3" r="1.55"/>
<circle cx="753.83" cy="492.3" r="1.55"/>
<circle cx="762.8" cy="492.3" r="1.55"/>
<circle cx="771.77" cy="492.3" r="1.55"/>
<circle cx="780.74" cy="492.3" r="1.55"/>
<circle cx="789.71" cy="492.3" r="1.55"/>
<circle cx="798.68" cy="492.3" r="1.55"/>
<circle cx="807.65" cy="492.3" r="1.55"/>
<circle cx="816.62" cy="492.3" r="1.55"/>
<circle cx="825.59" cy="492.3" r="1.55"/>
<circle cx="834.56" cy="492.3" r="1.55"/>
<circle cx="843.52" cy="492.3" r="1.55"/>
<circle cx="852.49" cy="492.3" r="1.55"/>
<circle cx="861.46" cy="492.3" r="1.55"/>
<circle cx="870.43" cy="492.3" r="1.55"/>
<circle cx="879.4" cy="492.3" r="1.55"/>
<circle cx="619.3" cy="501.3" r="1.55"/>
<circle cx="628.27" cy="501.3" r="1.55"/>
<circle cx="637.24" cy="501.3" r="1.55"/>
<circle cx="646.21" cy="501.3" r="1.55"/>
<circle cx="655.18" cy="501.3" r="1.55"/>
<circle cx="664.14" cy="501.3" r="1.55"/>
<circle cx="673.11" cy="501.3" r="1.55"/>
<circle cx="682.08" cy="501.3" r="1.55"/>
<circle cx="691.05" cy="501.3" r="1.55"/>
<circle cx="700.02" cy="501.3" r="1.55"/>
<circle cx="708.99" cy="501.3" r="1.55"/>
<circle cx="717.96" cy="501.3" r="1.55"/>
<circle cx="726.93" cy="501.3" r="1.55"/>
<circle cx="735.9" cy="501.3" r="1.55"/>
<circle cx="744.87" cy="501.3" r="1.55"/>
<circle cx="753.83" cy="501.3" r="1.55"/>
<circle cx="762.8" cy="501.3" r="1.55"/>
<circle cx="771.77" cy="501.3" r="1.55"/>
<circle cx="780.74" cy="501.3" r="1.55"/>
<circle cx="789.71" cy="501.3" r="1.55"/>
<circle cx="798.68" cy="501.3" r="1.55"/>
<circle cx="807.65" cy="501.3" r="1.55"/>
<circle cx="816.62" cy="501.3" r="1.55"/>
<circle cx="825.59" cy="501.3" r="1.55"/>
<circle cx="834.56" cy="501.3" r="1.55"/>
<circle cx="843.52" cy="501.3" r="1.55"/>
<circle cx="852.49" cy="501.3" r="1.55"/>
<circle cx="861.46" cy="501.3" r="1.55"/>
<circle cx="870.43" cy="501.3" r="1.55"/>
<circle cx="879.4" cy="501.3" r="1.55"/>
<circle cx="619.3" cy="510.2" r="1.55"/>
<circle cx="628.27" cy="510.2" r="1.55"/>
<circle cx="637.24" cy="510.2" r="1.55"/>
<circle cx="646.21" cy="510.2" r="1.55"/>
<circle cx="655.18" cy="510.2" r="1.55"/>
<circle cx="664.14" cy="510.2" r="1.55"/>
<circle cx="673.11" cy="510.2" r="1.55"/>
<circle cx="682.08" cy="510.2" r="1.55"/>
<circle cx="691.05" cy="510.2" r="1.55"/>
<circle cx="700.02" cy="510.2" r="1.55"/>
<circle cx="708.99" cy="510.2" r="1.55"/>
<circle cx="717.96" cy="510.2" r="1.55"/>
<circle cx="726.93" cy="510.2" r="1.55"/>
<circle cx="735.9" cy="510.2" r="1.55"/>
<circle cx="744.87" cy="510.2" r="1.55"/>
<circle cx="753.83" cy="510.2" r="1.55"/>
<circle cx="762.8" cy="510.2" r="1.55"/>
<circle cx="771.77" cy="510.2" r="1.55"/>
<circle cx="780.74" cy="510.2" r="1.55"/>
<circle cx="789.71" cy="510.2" r="1.55"/>
<circle cx="798.68" cy="510.2" r="1.55"/>
<circle cx="807.65" cy="510.2" r="1.55"/>
<circle cx="816.62" cy="510.2" r="1.55"/>
<circle cx="825.59" cy="510.2" r="1.55"/>
<circle cx="834.56" cy="510.2" r="1.55"/>
<circle cx="843.52" cy="510.2" r="1.55"/>
<circle cx="852.49" cy="510.2" r="1.55"/>
<circle cx="861.46" cy="510.2" r="1.55"/>
<circle cx="870.43" cy="510.2" r="1.55"/>
<circle cx="879.4" cy="510.2" r="1.55"/>
<circle cx="619.3" cy="519.2" r="1.55"/>
<circle cx="628.27" cy="519.2" r="1.55"/>
<circle cx="637.24" cy="519.2" r="1.55"/>
<circle cx="646.21" cy="519.2" r="1.55"/>
<circle cx="655.18" cy="519.2" r="1.55"/>
<circle cx="664.14" cy="519.2" r="1.55"/>
<circle cx="673.11" cy="519.2" r="1.55"/>
<circle cx="682.08" cy="519.2" r="1.55"/>
<circle cx="691.05" cy="519.2" r="1.55"/>
<circle cx="700.02" cy="519.2" r="1.55"/>
<circle cx="708.99" cy="519.2" r="1.55"/>
<circle cx="717.96" cy="519.2" r="1.55"/>
<circle cx="726.93" cy="519.2" r="1.55"/>
<circle cx="735.9" cy="519.2" r="1.55"/>
<circle cx="744.87" cy="519.2" r="1.55"/>
<circle cx="753.83" cy="519.2" r="1.55"/>
<circle cx="762.8" cy="519.2" r="1.55"/>
<circle cx="771.77" cy="519.2" r="1.55"/>
<circle cx="780.74" cy="519.2" r="1.55"/>
<circle cx="789.71" cy="519.2" r="1.55"/>
<circle cx="798.68" cy="519.2" r="1.55"/>
<circle cx="807.65" cy="519.2" r="1.55"/>
<circle cx="816.62" cy="519.2" r="1.55"/>
<circle cx="825.59" cy="519.2" r="1.55"/>
<circle cx="834.56" cy="519.2" r="1.55"/>
<circle cx="843.52" cy="519.2" r="1.55"/>
<circle cx="852.49" cy="519.2" r="1.55"/>
<circle cx="861.46" cy="519.2" r="1.55"/>
<circle cx="870.43" cy="519.2" r="1.55"/>
<circle cx="879.4" cy="519.2" r="1.55"/>
<circle cx="619.3" cy="528.2" r="1.55"/>
<circle cx="628.27" cy="528.2" r="1.55"/>
<circle cx="637.24" cy="528.2" r="1.55"/>
<circle cx="646.21" cy="528.2" r="1.55"/>
<circle cx="655.18" cy="528.2" r="1.55"/>
<circle cx="664.14" cy="528.2" r="1.55"/>
<circle cx="673.11" cy="528.2" r="1.55"/>
<circle cx="682.08" cy="528.2" r="1.55"/>
<circle cx="691.05" cy="528.2" r="1.55"/>
<circle cx="700.02" cy="528.2" r="1.55"/>
<circle cx="708.99" cy="528.2" r="1.55"/>
<circle cx="717.96" cy="528.2" r="1.55"/>
<circle cx="726.93" cy="528.2" r="1.55"/>
<circle cx="735.9" cy="528.2" r="1.55"/>
<circle cx="744.87" cy="528.2" r="1.55"/>
<circle cx="753.83" cy="528.2" r="1.55"/>
<circle cx="762.8" cy="528.2" r="1.55"/>
<circle cx="771.77" cy="528.2" r="1.55"/>
<circle cx="780.74" cy="528.2" r="1.55"/>
<circle cx="789.71" cy="528.2" r="1.55"/>
<circle cx="798.68" cy="528.2" r="1.55"/>
<circle cx="807.65" cy="528.2" r="1.55"/>
<circle cx="816.62" cy="528.2" r="1.55"/>
<circle cx="825.59" cy="528.2" r="1.55"/>
<circle cx="834.56" cy="528.2" r="1.55"/>
<circle cx="843.52" cy="528.2" r="1.55"/>
<circle cx="852.49" cy="528.2" r="1.55"/>
<circle cx="861.46" cy="528.2" r="1.55"/>
<circle cx="870.43" cy="528.2" r="1.55"/>
<circle cx="879.4" cy="528.2" r="1.55"/>
<circle cx="619.3" cy="555.1" r="1.55"/>
<circle cx="628.27" cy="555.1" r="1.55"/>
<circle cx="637.24" cy="555.1" r="1.55"/>
<circle cx="646.21" cy="555.1" r="1.55"/>
<circle cx="655.18" cy="555.1" r="1.55"/>
<circle cx="664.14" cy="555.1" r="1.55"/>
<circle cx="673.11" cy="555.1" r="1.55"/>
<circle cx="682.08" cy="555.1" r="1.55"/>
<circle cx="691.05" cy="555.1" r="1.55"/>
<circle cx="700.02" cy="555.1" r="1.55"/>
<circle cx="708.99" cy="555.1" r="1.55"/>
<circle cx="717.96" cy="555.1" r="1.55"/>
<circle cx="726.93" cy="555.1" r="1.55"/>
<circle cx="735.9" cy="555.1" r="1.55"/>
<circle cx="744.87" cy="555.1" r="1.55"/>
<circle cx="753.83" cy="555.1" r="1.55"/>
<circle cx="762.8" cy="555.1" r="1.55"/>
<circle cx="771.77" cy="555.1" r="1.55"/>
<circle cx="780.74" cy="555.1" r="1.55"/>
<circle cx="789.71" cy="555.1" r="1.55"/>
<circle cx="798.68" cy="555.1" r="1.55"/>
<circle cx="807.65" cy="555.1" r="1.55"/>
<circle cx="816.62" cy="555.1" r="1.55"/>
<circle cx="825.59" cy="555.1" r="1.55"/>
<circle cx="834.56" cy="555.1" r="1.55"/>
<circle cx="843.52" cy="555.1" r="1.55"/>
<circle cx="852.49" cy="555.1" r="1.55"/>
<circle cx="861.46" cy="555.1" r="1.55"/>
<circle cx="870.43" cy="555.1" r="1.55"/>
<circle cx="879.4" cy="555.1" r="1.55"/>
<circle cx="619.3" cy="564.1" r="1.55"/>
<circle cx="628.27" cy="564.1" r="1.55"/>
<circle cx="637.24" cy="564.1" r="1.55"/>
<circle cx="646.21" cy="564.1" r="1.55"/>
<circle cx="655.18" cy="564.1" r="1.55"/>
<circle cx="664.14" cy="564.1" r="1.55"/>
<circle cx="673.11" cy="564.1" r="1.55"/>
<circle cx="682.08" cy="564.1" r="1.55"/>
<circle cx="691.05" cy="564.1" r="1.55"/>
<circle cx="700.02" cy="564.1" r="1.55"/>
<circle cx="708.99" cy="564.1" r="1.55"/>
<circle cx="717.96" cy="564.1" r="1.55"/>
<circle cx="726.93" cy="564.1" r="1.55"/>
<circle cx="735.9" cy="564.1" r="1.55"/>
<circle cx="744.87" cy="564.1" r="1.55"/>
<circle cx="753.83" cy="564.1" r="1.55"/>
<circle cx="762.8" cy="564.1" r="1.55"/>
<circle cx="771.77" cy="564.1" r="1.55"/>
<circle cx="780.74" cy="564.1" r="1.55"/>
<circle cx="789.71" cy="564.1" r="1.55"/>
<circle cx="798.68" cy="564.1" r="1.55"/>
<circle cx="807.65" cy="564.1" r="1.55"/>
<circle cx="816.62" cy="564.1" r="1.55"/>
<circle cx="825.59" cy="564.1" r="1.55"/>
<circle cx="834.56" cy="564.1" r="1.55"/>
<circle cx="843.52" cy="564.1" r="1.55"/>
<circle cx="852.49" cy="564.1" r="1.55"/>
<circle cx="861.46" cy="564.1" r="1.55"/>
<circle cx="870.43" cy="564.1" r="1.55"/>
<circle cx="879.4" cy="564.1" r="1.55"/>
<circle cx="619.3" cy="573.1" r="1.55"/>
<circle cx="628.27" cy="573.1" r="1.55"/>
<circle cx="637.24" cy="573.1" r="1.55"/>
<circle cx="646.21" cy="573.1" r="1.55"/>
<circle cx="655.18" cy="573.1" r="1.55"/>
<circle cx="664.14" cy="573.1" r="1.55"/>
<circle cx="673.11" cy="573.1" r="1.55"/>
<circle cx="682.08" cy="573.1" r="1.55"/>
<circle cx="691.05" cy="573.1" r="1.55"/>
<circle cx="700.02" cy="573.1" r="1.55"/>
<circle cx="708.99" cy="573.1" r="1.55"/>
<circle cx="717.96" cy="573.1" r="1.55"/>
<circle cx="726.93" cy="573.1" r="1.55"/>
<circle cx="735.9" cy="573.1" r="1.55"/>
<circle cx="744.87" cy="573.1" r="1.55"/>
<circle cx="753.83" cy="573.1" r="1.55"/>
<circle cx="762.8" cy="573.1" r="1.55"/>
<circle cx="771.77" cy="573.1" r="1.55"/>
<circle cx="780.74" cy="573.1" r="1.55"/>
<circle cx="789.71" cy="573.1" r="1.55"/>
<circle cx="798.68" cy="573.1" r="1.55"/>
<circle cx="807.65" cy="573.1" r="1.55"/>
<circle cx="816.62" cy="573.1" r="1.55"/>
<circle cx="825.59" cy="573.1" r="1.55"/>
<circle cx="834.56" cy="573.1" r="1.55"/>
<circle cx="843.52" cy="573.1" r="1.55"/>
<circle cx="852.49" cy="573.1" r="1.55"/>
<circle cx="861.46" cy="573.1" r="1.55"/>
<circle cx="870.43" cy="573.1" r="1.55"/>
<circle cx="879.4" cy="573.1" r="1.55"/>
<circle cx="619.3" cy="582.1" r="1.55"/>
<circle cx="628.27" cy="582.1" r="1.55"/>
<circle cx="637.24" cy="582.1" r="1.55"/>
<circle cx="646.21" cy="582.1" r="1.55"/>
<circle cx="655.18" cy="582.1" r="1.55"/>
<circle cx="664.14" cy="582.1" r="1.55"/>
<circle cx="673.11" cy="582.1" r="1.55"/>
<circle cx="682.08" cy="582.1" r="1.55"/>
<circle cx="691.05" cy="582.1" r="1.55"/>
<circle cx="700.02" cy="582.1" r="1.55"/>
<circle cx="708.99" cy="582.1" r="1.55"/>
<circle cx="717.96" cy="582.1" r="1.55"/>
<circle cx="726.93" cy="582.1" r="1.55"/>
<circle cx="735.9" cy="582.1" r="1.55"/>
<circle cx="744.87" cy="582.1" r="1.55"/>
<circle cx="753.83" cy="582.1" r="1.55"/>
<circle cx="762.8" cy="582.1" r="1.55"/>
<circle cx="771.77" cy="582.1" r="1.55"/>
<circle cx="780.74" cy="582.1" r="1.55"/>
<circle cx="789.71" cy="582.1" r="1.55"/>
<circle cx="798.68" cy="582.1" r="1.55"/>
<circle cx="807.65" cy="582.1" r="1.55"/>
<circle cx="816.62" cy="582.1" r="1.55"/>
<circle cx="825.59" cy="582.1" r="1.55"/>
<circle cx="834.56" cy="582.1" r="1.55"/>
<circle cx="843.52" cy="582.1" r="1.55"/>
<circle cx="852.49" cy="582.1" r="1.55"/>
<circle cx="861.46" cy="582.1" r="1.55"/>
<circle cx="870.43" cy="582.1" r="1.55"/>
<circle cx="879.4" cy="582.1" r="1.55"/>
<circle cx="619.3" cy="591.1" r="1.55"/>
<circle cx="628.27" cy="591.1" r="1.55"/>
<circle cx="637.24" cy="591.1" r="1.55"/>
<circle cx="646.21" cy="591.1" r="1.55"/>
<circle cx="655.18" cy="591.1" r="1.55"/>
<circle cx="664.14" cy="591.1" r="1.55"/>
<circle cx="673.11" cy="591.1" r="1.55"/>
<circle cx="682.08" cy="591.1" r="1.55"/>
<circle cx="691.05" cy="591.1" r="1.55"/>
<circle cx="700.02" cy="591.1" r="1.55"/>
<circle cx="708.99" cy="591.1" r="1.55"/>
<circle cx="717.96" cy="591.1" r="1.55"/>
<circle cx="726.93" cy="591.1" r="1.55"/>
<circle cx="735.9" cy="591.1" r="1.55"/>
<circle cx="744.87" cy="591.1" r="1.55"/>
<circle cx="753.83" cy="591.1" r="1.55"/>
<circle cx="762.8" cy="591.1" r="1.55"/>
<circle cx="771.77" cy="591.1" r="1.55"/>
<circle cx="780.74" cy="591.1" r="1.55"/>
<circle cx="789.71" cy="591.1" r="1.55"/>
<circle cx="798.68" cy="591.1" r="1.55"/>
<circle cx="807.65" cy="591.1" r="1.55"/>
<circle cx="816.62" cy="591.1" r="1.55"/>
<circle cx="825.59" cy="591.1" r="1.55"/>
<circle cx="834.56" cy="591.1" r="1.55"/>
<circle cx="843.52" cy="591.1" r="1.55"/>
<circle cx="852.49" cy="591.1" r="1.55"/>
<circle cx="861.46" cy="591.1" r="1.55"/>
<circle cx="870.43" cy="591.1" r="1.55"/>
<circle cx="879.4" cy="591.1" r="1.55"/>
<circle cx="619.3" cy="618" r="1.55"/>
<circle cx="628.27" cy="618" r="1.55"/>
<circle cx="637.24" cy="618" r="1.55"/>
<circle cx="646.21" cy="618" r="1.55"/>
<circle cx="655.18" cy="618" r="1.55"/>
<circle cx="664.14" cy="618" r="1.55"/>
<circle cx="673.11" cy="618" r="1.55"/>
<circle cx="682.08" cy="618" r="1.55"/>
<circle cx="691.05" cy="618" r="1.55"/>
<circle cx="700.02" cy="618" r="1.55"/>
<circle cx="708.99" cy="618" r="1.55"/>
<circle cx="717.96" cy="618" r="1.55"/>
<circle cx="726.93" cy="618" r="1.55"/>
<circle cx="735.9" cy="618" r="1.55"/>
<circle cx="744.87" cy="618" r="1.55"/>
<circle cx="753.83" cy="618" r="1.55"/>
<circle cx="762.8" cy="618" r="1.55"/>
<circle cx="771.77" cy="618" r="1.55"/>
<circle cx="780.74" cy="618" r="1.55"/>
<circle cx="789.71" cy="618" r="1.55"/>
<circle cx="798.68" cy="618" r="1.55"/>
<circle cx="807.65" cy="618" r="1.55"/>
<circle cx="816.62" cy="618" r="1.55"/>
<circle cx="825.59" cy="618" r="1.55"/>
<circle cx="834.56" cy="618" r="1.55"/>
<circle cx="843.52" cy="618" r="1.55"/>
<circle cx="852.49" cy="618" r="1.55"/>
<circle cx="861.46" cy="618" r="1.55"/>
<circle cx="870.43" cy="618" r="1.55"/>
<circle cx="879.4" cy="618" r="1.55"/>
<circle cx="619.3" cy="626.9" r="1.55"/>
<circle cx="628.27" cy="626.9" r="1.55"/>
<circle cx="637.24" cy="626.9" r="1.55"/>
<circle cx="646.21" cy="626.9" r="1.55"/>
<circle cx="655.18" cy="626.9" r="1.55"/>
<circle cx="664.14" cy="626.9" r="1.55"/>
<circle cx="673.11" cy="626.9" r="1.55"/>
<circle cx="682.08" cy="626.9" r="1.55"/>
<circle cx="691.05" cy="626.9" r="1.55"/>
<circle cx="700.02" cy="626.9" r="1.55"/>
<circle cx="708.99" cy="626.9" r="1.55"/>
<circle cx="717.96" cy="626.9" r="1.55"/>
<circle cx="726.93" cy="626.9" r="1.55"/>
<circle cx="735.9" cy="626.9" r="1.55"/>
<circle cx="744.87" cy="626.9" r="1.55"/>
<circle cx="753.83" cy="626.9" r="1.55"/>
<circle cx="762.8" cy="626.9" r="1.55"/>
<circle cx="771.77" cy="626.9" r="1.55"/>
<circle cx="780.74" cy="626.9" r="1.55"/>
<circle cx="789.71" cy="626.9" r="1.55"/>
<circle cx="798.68" cy="626.9" r="1.55"/>
<circle cx="807.65" cy="626.9" r="1.55"/>
<circle cx="816.62" cy="626.9" r="1.55"/>
<circle cx="825.59" cy="626.9" r="1.55"/>
<circle cx="834.56" cy="626.9" r="1.55"/>
<circle cx="843.52" cy="626.9" r="1.55"/>
<circle cx="852.49" cy="626.9" r="1.55"/>
<circle cx="861.46" cy="626.9" r="1.55"/>
<circle cx="870.43" cy="626.9" r="1.55"/>
<circle cx="879.4" cy="626.9" r="1.55"/>
</g>
<g font-family="Liberation Sans, sans-serif" font-size="5.4" fill="#555" text-anchor="middle">
<text transform="translate(621.2 484.0) rotate(-90)">1</text>
<text transform="translate(621.2 599.2) rotate(-90)">1</text>
<text transform="translate(630.17 484.0) rotate(-90)">2</text>
<text transform="translate(630.17 599.2) rotate(-90)">2</text>
<text transform="translate(639.14 484.0) rotate(-90)">3</text>
<text transform="translate(639.14 599.2) rotate(-90)">3</text>
<text transform="translate(648.11 484.0) rotate(-90)">4</text>
<text transform="translate(648.11 599.2) rotate(-90)">4</text>
<text transform="translate(657.08 484.0) rotate(-90)">5</text>
<text transform="translate(657.08 599.2) rotate(-90)">5</text>
<text transform="translate(666.04 484.0) rotate(-90)">6</text>
<text transform="translate(666.04 599.2) rotate(-90)">6</text>
<text transform="translate(675.01 484.0) rotate(-90)">7</text>
<text transform="translate(675.01 599.2) rotate(-90)">7</text>
<text transform="translate(683.98 484.0) rotate(-90)">8</text>
<text transform="translate(683.98 599.2) rotate(-90)">8</text>
<text transform="translate(692.95 484.0) rotate(-90)">9</text>
<text transform="translate(692.95 599.2) rotate(-90)">9</text>
<text transform="translate(701.92 484.0) rotate(-90)">10</text>
<text transform="translate(701.92 599.2) rotate(-90)">10</text>
<text transform="translate(710.89 484.0) rotate(-90)">11</text>
<text transform="translate(710.89 599.2) rotate(-90)">11</text>
<text transform="translate(719.86 484.0) rotate(-90)">12</text>
<text transform="translate(719.86 599.2) rotate(-90)">12</text>
<text transform="translate(728.83 484.0) rotate(-90)">13</text>
<text transform="translate(728.83 599.2) rotate(-90)">13</text>
<text transform="translate(737.8 484.0) rotate(-90)">14</text>
<text transform="translate(737.8 599.2) rotate(-90)">14</text>
<text transform="translate(746.77 484.0) rotate(-90)">15</text>
<text transform="translate(746.77 599.2) rotate(-90)">15</text>
<text transform="translate(755.73 484.0) rotate(-90)">16</text>
<text transform="translate(755.73 599.2) rotate(-90)">16</text>
<text transform="translate(764.7 484.0) rotate(-90)">17</text>
<text transform="translate(764.7 599.2) rotate(-90)">17</text>
<text transform="translate(773.67 484.0) rotate(-90)">18</text>
<text transform="translate(773.67 599.2) rotate(-90)">18</text>
<text transform="translate(782.64 484.0) rotate(-90)">19</text>
<text transform="translate(782.64 599.2) rotate(-90)">19</text>
<text transform="translate(791.61 484.0) rotate(-90)">20</text>
<text transform="translate(791.61 599.2) rotate(-90)">20</text>
<text transform="translate(800.58 484.0) rotate(-90)">21</text>
<text transform="translate(800.58 599.2) rotate(-90)">21</text>
<text transform="translate(809.55 484.0) rotate(-90)">22</text>
<text transform="translate(809.55 599.2) rotate(-90)">22</text>
<text transform="translate(818.52 484.0) rotate(-90)">23</text>
<text transform="translate(818.52 599.2) rotate(-90)">23</text>
<text transform="translate(827.49 484.0) rotate(-90)">24</text>
<text transform="translate(827.49 599.2) rotate(-90)">24</text>
<text transform="translate(836.46 484.0) rotate(-90)">25</text>
<text transform="translate(836.46 599.2) rotate(-90)">25</text>
<text transform="translate(845.42 484.0) rotate(-90)">26</text>
<text transform="translate(845.42 599.2) rotate(-90)">26</text>
<text transform="translate(854.39 484.0) rotate(-90)">27</text>
<text transform="translate(854.39 599.2) rotate(-90)">27</text>
<text transform="translate(863.36 484.0) rotate(-90)">28</text>
<text transform="translate(863.36 599.2) rotate(-90)">28</text>
<text transform="translate(872.33 484.0) rotate(-90)">29</text>
<text transform="translate(872.33 599.2) rotate(-90)">29</text>
<text transform="translate(881.3 484.0) rotate(-90)">30</text>
<text transform="translate(881.3 599.2) rotate(-90)">30</text>
<text font-size="6.6" fill="#5c5c5c" transform="translate(612.0 492.3) rotate(-90)">j</text>
<text font-size="6.6" fill="#5c5c5c" transform="translate(891.0 492.3) rotate(-90)">j</text>
<text font-size="6.6" fill="#5c5c5c" transform="translate(612.0 501.3) rotate(-90)">i</text>
<text font-size="6.6" fill="#5c5c5c" transform="translate(891.0 501.3) rotate(-90)">i</text>
<text font-size="6.6" fill="#5c5c5c" transform="translate(612.0 510.2) rotate(-90)">h</text>
<text font-size="6.6" fill="#5c5c5c" transform="translate(891.0 510.2) rotate(-90)">h</text>
<text font-size="6.6" fill="#5c5c5c" transform="translate(612.0 519.2) rotate(-90)">g</text>
<text font-size="6.6" fill="#5c5c5c" transform="translate(891.0 519.2) rotate(-90)">g</text>
<text font-size="6.6" fill="#5c5c5c" transform="translate(612.0 528.2) rotate(-90)">f</text>
<text font-size="6.6" fill="#5c5c5c" transform="translate(891.0 528.2) rotate(-90)">f</text>
<text font-size="6.6" fill="#5c5c5c" transform="translate(612.0 555.1) rotate(-90)">e</text>
<text font-size="6.6" fill="#5c5c5c" transform="translate(891.0 555.1) rotate(-90)">e</text>
<text font-size="6.6" fill="#5c5c5c" transform="translate(612.0 564.1) rotate(-90)">d</text>
<text font-size="6.6" fill="#5c5c5c" transform="translate(891.0 564.1) rotate(-90)">d</text>
<text font-size="6.6" fill="#5c5c5c" transform="translate(612.0 573.1) rotate(-90)">c</text>
<text font-size="6.6" fill="#5c5c5c" transform="translate(891.0 573.1) rotate(-90)">c</text>
<text font-size="6.6" fill="#5c5c5c" transform="translate(612.0 582.1) rotate(-90)">b</text>
<text font-size="6.6" fill="#5c5c5c" transform="translate(891.0 582.1) rotate(-90)">b</text>
<text font-size="6.6" fill="#5c5c5c" transform="translate(612.0 591.1) rotate(-90)">a</text>
<text font-size="6.6" fill="#5c5c5c" transform="translate(891.0 591.1) rotate(-90)">a</text>
</g>
<path d="M664.14 465.7V501.9" stroke="#8e8e8e" stroke-width="1.5" stroke-linecap="round"/>
<path d="M664.14 469.9C665.35 471.5 668.35 472.3 668.35 474.9C668.35 477.5 667.44 477.5 667.44 479.3V487.4C667.44 489.2 668.35 489.2 668.35 491.8C668.35 494.4 665.35 495.2 664.14 496.8C662.94 495.2 659.94 494.4 659.94 491.8C659.94 489.2 660.85 489.2 660.85 487.4V479.3C660.85 477.5 659.94 477.5 659.94 474.9C659.94 472.3 662.94 471.5 664.14 469.9z" fill="#deb97f"/>
<rect x="660.04" y="474.9" width="8.2" height="0.9" fill="#ac9c3c"/>
<rect x="660.85" y="480.7" width="6.6" height="2.5" fill="#fb1a1a"/>
<rect x="660.85" y="485.3" width="6.6" height="2.4" fill="#0d0d0d"/>
<rect x="660" y="489.8" width="8.3" height="2.4" rx="0.5" fill="#8a4714"/>
<path d="M664.14 520V529M673.11 520V529" stroke="#8b8b8b" stroke-width="1.6" stroke-linecap="round"/>
<ellipse cx="668.63" cy="513.0" rx="9.5" ry="8.3" fill="#e3e0ae" stroke="#c2713b" stroke-width="1.6"/>
<path d="M665.03 508.8H671.53a2.05 2.05 0 0 1 0 4.1H665.73a2.05 2.05 0 0 0 0 4.1H672.23" fill="none" stroke="#c2713b" stroke-width="2.7" stroke-linecap="round"/>
<path d="M665.03 508.8H671.53a2.05 2.05 0 0 1 0 4.1H665.73a2.05 2.05 0 0 0 0 4.1H672.23" fill="none" stroke="#dba873" stroke-width="1.0" stroke-linecap="round"/>
<path d="M717.96 465.7V501.9" stroke="#8e8e8e" stroke-width="1.5" stroke-linecap="round"/>
<path d="M717.96 469.9C719.16 471.5 722.16 472.3 722.16 474.9C722.16 477.5 721.26 477.5 721.26 479.3V487.4C721.26 489.2 722.16 489.2 722.16 491.8C722.16 494.4 719.16 495.2 717.96 496.8C716.76 495.2 713.76 494.4 713.76 491.8C713.76 489.2 714.66 489.2 714.66 487.4V479.3C714.66 477.5 713.76 477.5 713.76 474.9C713.76 472.3 716.76 471.5 717.96 469.9z" fill="#deb97f"/>
<rect x="713.86" y="474.9" width="8.2" height="0.9" fill="#ac9c3c"/>
<rect x="714.66" y="480.7" width="6.6" height="2.5" fill="#fb1a1a"/>
<rect x="714.66" y="485.3" width="6.6" height="2.4" fill="#0d0d0d"/>
<rect x="713.81" y="489.8" width="8.3" height="2.4" rx="0.5" fill="#8a4714"/>
<path d="M717.96 520V529M726.93 520V529" stroke="#8b8b8b" stroke-width="1.6" stroke-linecap="round"/>
<ellipse cx="722.44" cy="513.0" rx="9.5" ry="8.3" fill="#e3e0ae" stroke="#c2713b" stroke-width="1.6"/>
<path d="M718.84 508.8H725.34a2.05 2.05 0 0 1 0 4.1H719.54a2.05 2.05 0 0 0 0 4.1H726.04" fill="none" stroke="#c2713b" stroke-width="2.7" stroke-linecap="round"/>
<path d="M718.84 508.8H725.34a2.05 2.05 0 0 1 0 4.1H719.54a2.05 2.05 0 0 0 0 4.1H726.04" fill="none" stroke="#dba873" stroke-width="1.0" stroke-linecap="round"/>
<path d="M771.77 465.7V501.9" stroke="#8e8e8e" stroke-width="1.5" stroke-linecap="round"/>
<path d="M771.77 469.9C772.97 471.5 775.97 472.3 775.97 474.9C775.97 477.5 775.07 477.5 775.07 479.3V487.4C775.07 489.2 775.97 489.2 775.97 491.8C775.97 494.4 772.97 495.2 771.77 496.8C770.57 495.2 767.57 494.4 767.57 491.8C767.57 489.2 768.47 489.2 768.47 487.4V479.3C768.47 477.5 767.57 477.5 767.57 474.9C767.57 472.3 770.57 471.5 771.77 469.9z" fill="#deb97f"/>
<rect x="767.67" y="474.9" width="8.2" height="0.9" fill="#ac9c3c"/>
<rect x="768.47" y="480.7" width="6.6" height="2.5" fill="#fb1a1a"/>
<rect x="768.47" y="485.3" width="6.6" height="2.4" fill="#0d0d0d"/>
<rect x="767.62" y="489.8" width="8.3" height="2.4" rx="0.5" fill="#8a4714"/>
<path d="M771.77 520V529M780.74 520V529" stroke="#8b8b8b" stroke-width="1.6" stroke-linecap="round"/>
<ellipse cx="776.26" cy="513.0" rx="9.5" ry="8.3" fill="#e3e0ae" stroke="#c2713b" stroke-width="1.6"/>
<path d="M772.66 508.8H779.16a2.05 2.05 0 0 1 0 4.1H773.36a2.05 2.05 0 0 0 0 4.1H779.86" fill="none" stroke="#c2713b" stroke-width="2.7" stroke-linecap="round"/>
<path d="M772.66 508.8H779.16a2.05 2.05 0 0 1 0 4.1H773.36a2.05 2.05 0 0 0 0 4.1H779.86" fill="none" stroke="#dba873" stroke-width="1.0" stroke-linecap="round"/>
<path d="M816.62 465.7V501.9" stroke="#8e8e8e" stroke-width="1.5" stroke-linecap="round"/>
<path d="M816.62 469.9C817.82 471.5 820.82 472.3 820.82 474.9C820.82 477.5 819.92 477.5 819.92 479.3V487.4C819.92 489.2 820.82 489.2 820.82 491.8C820.82 494.4 817.82 495.2 816.62 496.8C815.42 495.2 812.42 494.4 812.42 491.8C812.42 489.2 813.32 489.2 813.32 487.4V479.3C813.32 477.5 812.42 477.5 812.42 474.9C812.42 472.3 815.42 471.5 816.62 469.9z" fill="#deb97f"/>
<rect x="812.52" y="474.9" width="8.2" height="0.9" fill="#ac9c3c"/>
<rect x="813.32" y="480.7" width="6.6" height="2.5" fill="#fb1a1a"/>
<rect x="813.32" y="485.3" width="6.6" height="2.4" fill="#0d0d0d"/>
<rect x="812.47" y="489.8" width="8.3" height="2.4" rx="0.5" fill="#8a4714"/>
<path d="M816.62 520V529M825.59 520V529" stroke="#8b8b8b" stroke-width="1.6" stroke-linecap="round"/>
<ellipse cx="821.1" cy="513.0" rx="9.5" ry="8.3" fill="#e3e0ae" stroke="#c2713b" stroke-width="1.6"/>
<path d="M817.5 508.8H824a2.05 2.05 0 0 1 0 4.1H818.2a2.05 2.05 0 0 0 0 4.1H824.7" fill="none" stroke="#c2713b" stroke-width="2.7" stroke-linecap="round"/>
<path d="M817.5 508.8H824a2.05 2.05 0 0 1 0 4.1H818.2a2.05 2.05 0 0 0 0 4.1H824.7" fill="none" stroke="#dba873" stroke-width="1.0" stroke-linecap="round"/>
<path d="M780.74 582V618.6" stroke="#8e8e8e" stroke-width="1.5" stroke-linecap="round"/>
<path d="M780.74 586.2C781.94 587.8 784.94 588.6 784.94 591.2C784.94 593.8 784.04 593.8 784.04 595.6V604.1C784.04 605.9 784.94 605.9 784.94 608.5C784.94 611.1 781.94 611.9 780.74 613.5C779.54 611.9 776.54 611.1 776.54 608.5C776.54 605.9 777.44 605.9 777.44 604.1V595.6C777.44 593.8 776.54 593.8 776.54 591.2C776.54 588.6 779.54 587.8 780.74 586.2z" fill="#deb97f"/>
<rect x="776.64" y="591.2" width="8.2" height="0.9" fill="#ac9c3c"/>
<rect x="777.44" y="597" width="6.6" height="2.5" fill="#fb1a1a"/>
<rect x="777.44" y="601.6" width="6.6" height="2.4" fill="#0d0d0d"/>
<rect x="776.59" y="606.1" width="8.3" height="2.4" rx="0.5" fill="#8a4714"/>
<path d="M816.62 582V618.6" stroke="#8e8e8e" stroke-width="1.5" stroke-linecap="round"/>
<path d="M816.62 586.2C817.82 587.8 820.82 588.6 820.82 591.2C820.82 593.8 819.92 593.8 819.92 595.6V604.1C819.92 605.9 820.82 605.9 820.82 608.5C820.82 611.1 817.82 611.9 816.62 613.5C815.42 611.9 812.42 611.1 812.42 608.5C812.42 605.9 813.32 605.9 813.32 604.1V595.6C813.32 593.8 812.42 593.8 812.42 591.2C812.42 588.6 815.42 587.8 816.62 586.2z" fill="#deb97f"/>
<rect x="812.52" y="591.2" width="8.2" height="0.9" fill="#ac9c3c"/>
<rect x="813.32" y="597" width="6.6" height="2.5" fill="#fb1a1a"/>
<rect x="813.32" y="601.6" width="6.6" height="2.4" fill="#0d0d0d"/>
<rect x="812.47" y="606.1" width="8.3" height="2.4" rx="0.5" fill="#8a4714"/>
<path d="M843.52 582V618.6" stroke="#8e8e8e" stroke-width="1.5" stroke-linecap="round"/>
<path d="M843.52 586.2C844.73 587.8 847.73 588.6 847.73 591.2C847.73 593.8 846.82 593.8 846.82 595.6V604.1C846.82 605.9 847.73 605.9 847.73 608.5C847.73 611.1 844.73 611.9 843.52 613.5C842.32 611.9 839.32 611.1 839.32 608.5C839.32 605.9 840.23 605.9 840.23 604.1V595.6C840.23 593.8 839.32 593.8 839.32 591.2C839.32 588.6 842.32 587.8 843.52 586.2z" fill="#deb97f"/>
<rect x="839.42" y="591.2" width="8.2" height="0.9" fill="#ac9c3c"/>
<rect x="840.23" y="597" width="6.6" height="2.5" fill="#fb1a1a"/>
<rect x="840.23" y="601.6" width="6.6" height="2.4" fill="#0d0d0d"/>
<rect x="839.38" y="606.1" width="8.3" height="2.4" rx="0.5" fill="#8a4714"/>
<path d="M780.74 566V573.4M787.81 566L789.71 573.4" stroke="#8b8b8b" stroke-width="1.5" stroke-linecap="round" fill="none"/>
<path d="M778.33 564.4V553.4a6.15 6.15 0 0 1 12.3 0V560q1.1 0.4 1.1 1.5V564.6c0 4.2 -13.4 4.4 -13.4 -0.2z" fill="#1f8529"/>
<path d="M816.62 566V573.4M823.69 566L825.59 573.4" stroke="#8b8b8b" stroke-width="1.5" stroke-linecap="round" fill="none"/>
<path d="M814.2 564.4V553.4a6.15 6.15 0 0 1 12.3 0V560q1.1 0.4 1.1 1.5V564.6c0 4.2 -13.4 4.4 -13.4 -0.2z" fill="#83711f"/>
<path d="M843.52 566V573.4M850.59 566L852.49 573.4" stroke="#8b8b8b" stroke-width="1.5" stroke-linecap="round" fill="none"/>
<path d="M841.11 564.4V553.4a6.15 6.15 0 0 1 12.3 0V560q1.1 0.4 1.1 1.5V564.6c0 4.2 -13.4 4.4 -13.4 -0.2z" fill="#7a2021"/>
<path d="M397 634.5L397 661.4Q397 670.9 406.5 670.9L554.5 670.9Q564 670.9 564 661.4L564 475.1Q564 465.6 573.5 465.6L619.3 465.6" fill="none" stroke="#e5222a" stroke-width="2.4" stroke-linecap="round" stroke-linejoin="round"/>
<path d="M415 634.5L415 652.3Q415 661.8 424.5 661.8L540.1 661.8Q549.6 661.8 549.6 652.3L549.6 627.5Q549.6 618 559.1 618L619.3 618" fill="none" stroke="#2b3135" stroke-width="2.2" stroke-linecap="round" stroke-linejoin="round"/>
<path d="M486.6 464L486.6 448Q486.6 438.5 496.1 438.5L628.6 438.5Q638.1 438.5 638.1 448L638.1 470.5Q638.1 479 644.52 484.57L664.14 501.6" fill="none" stroke="#f6d700" stroke-width="2.3" stroke-linecap="round" stroke-linejoin="round"/>
<path d="M477.7 464L477.7 440.8Q477.7 431.3 487.2 431.3L684.6 431.3Q694.1 431.3 694.1 440.8L694.1 464.8Q694.1 473.3 699.58 479.8L717.96 501.6" fill="none" stroke="#f6d700" stroke-width="2.3" stroke-linecap="round" stroke-linejoin="round"/>
<path d="M468.7 464L468.7 437Q468.7 427.5 478.2 427.5L746.6 427.5Q756.1 427.5 756.1 437L756.1 463Q756.1 471.5 760.03 479.04L771.77 501.6" fill="none" stroke="#f6d700" stroke-width="2.3" stroke-linecap="round" stroke-linejoin="round"/>
<path d="M459.6 464L459.6 432.2Q459.6 422.7 469.1 422.7L796.4 422.7Q805.9 422.7 805.9 432.2L805.9 466.5Q805.9 475 809.08 482.88L816.62 501.6" fill="none" stroke="#f6d700" stroke-width="2.3" stroke-linecap="round" stroke-linejoin="round"/>
<path d="M409.5 464L409.5 401.8Q409.5 392.3 419 392.3L526.5 392.3Q536 392.3 536 401.8L536 714.5Q536 724 545.5 724L780.21 724Q789.71 724 789.71 714.5L789.71 582" fill="none" stroke="#f6d700" stroke-width="2.3" stroke-linecap="round" stroke-linejoin="round"/>
<path d="M400.7 464L400.7 396.3Q400.7 386.8 410.2 386.8L529.6 386.8Q539.1 386.8 539.1 396.3L539.1 723.6Q539.1 733.1 548.6 733.1L816.09 733.1Q825.59 733.1 825.59 723.6L825.59 582" fill="none" stroke="#f6d700" stroke-width="2.3" stroke-linecap="round" stroke-linejoin="round"/>
<path d="M391.7 464L391.7 387.6Q391.7 378.1 401.2 378.1L536.7 378.1Q546.2 378.1 546.2 387.6L546.2 734.1Q546.2 743.6 555.7 743.6L842.99 743.6Q852.49 743.6 852.49 734.1L852.49 582" fill="none" stroke="#f6d700" stroke-width="2.3" stroke-linecap="round" stroke-linejoin="round"/>
</svg>

<div id="panel">
  <div id="tb">
    <div class="dd" style="left:6px;width:237px;"><span class="ddt" style="left:15px;letter-spacing:0.95px;">Text</span><i class="car" style="left:210.5px;"></i></div>
    <div class="vs" style="left:249px;"></div>
    <div class="btn" style="left:258px;width:38px;">
      <svg width="36" height="28" viewBox="0 0 36 28"><path d="M16.3 5.5h4.4v5.6h3.6L18.5 17.6 12.7 11.1h3.6z" fill="#34485f"/><rect x="9.6" y="18.6" width="18" height="2.2" fill="#34485f"/></svg>
    </div>
    <div class="btn" style="left:304px;width:38px;">
      <svg width="36" height="28" viewBox="0 0 36 28"><path d="M12.6 3.6h11.8l2.9 6.6H9.7z" fill="#34485f"/><path d="M12.9 5.6h11.2M12.2 7.4h12.6" stroke="#f1f2f5" stroke-width="0.8"/><rect x="9.7" y="10.2" width="17.6" height="9.6" rx="1.2" fill="#34485f"/><rect x="14.6" y="12.8" width="7.8" height="1.3" fill="#f1f2f5"/></svg>
    </div>
    <div class="btn" style="left:350px;width:50px;"><span class="bigA">A</span><span class="smA">A</span><i class="car" style="left:34px;"></i></div>
    <div class="vs" style="left:407px;"></div>
    <div class="dd" style="left:414px;width:200px;"><span class="ddt" style="left:15px;letter-spacing:0.72px;">1 (Arduino Uno R3)</span><i class="car" style="left:161px;"></i></div>
  </div>
  <div id="ed">
    <div id="gut"><div>1</div><div>2</div><div>3</div><div>4</div><div>5</div><div>6</div><div>7</div><div>8</div><div>9</div><div>10</div><div>11</div><div>12</div><div>13</div><div>14</div><div>15</div><div>16</div><div>17</div><div>18</div><div>19</div><div>20</div><div>21</div><div>22</div><div>23</div><div>24</div><div>25</div><div>26</div><div>27</div><div>28</div><div>29</div><div>30</div><div>31</div><div>32</div><div>33</div><div>34</div><div>35</div><div>36</div><div>37</div><div>38</div><div>39</div><div>40</div><div>41</div><div>42</div><div>43</div><div>44</div><div>45</div><div>46</div><div>47</div><div>48</div><div>49</div></div>
    <pre id="code"><div><span class="k">void</span> setup()</div><div>{</div><div>  pinMode(<span class="n">0</span>, INPUT);</div><div>  pinMode(<span class="n">1</span>, INPUT);</div><div>  pinMode(<span class="n">2</span>, INPUT);</div><div>  pinMode(<span class="n">3</span>, INPUT);</div><div>  pinMode(<span class="n">8</span>, OUTPUT);</div><div>  pinMode(<span class="n">9</span>, OUTPUT);</div><div>  pinMode(<span class="n">10</span>, OUTPUT);</div><div>}</div><div>&nbsp;</div><div><span class="k">void</span> loop()</div><div>{</div><div>  <span class="k">int</span> input = <span class="n">0</span>;</div><div>  <span class="k">if</span> (digitalRead(<span class="n">0</span>) == <span class="a">true</span>){</div><div>    input++;</div><div>  }</div><div>    <span class="k">if</span> (digitalRead(<span class="n">1</span>) == <span class="a">true</span>){</div><div>    input++;</div><div>  }</div><div>    <span class="k">if</span> (digitalRead(<span class="n">2</span>) == <span class="a">true</span>){</div><div>    input++;</div><div>  }</div><div>    <span class="k">if</span> (digitalRead(<span class="n">3</span>) == <span class="a">true</span>){</div><div>    input++;</div><div>  }</div><div>&nbsp;</div><div>  <span class="k">if</span>(input == <span class="n">2</span>) {</div><div>    digitalWrite(<span class="n">8</span>, HIGH);</div><div>  }</div><div>    <span class="k">else</span> {</div><div>   digitalWrite(<span class="n">8</span>, LOW);</div><div>  }</div><div>    <span class="k">if</span>(input == <span class="n">3</span>) {</div><div>    digitalWrite(<span class="n">9</span>, HIGH);</div><div>  }</div><div>  <span class="k">else</span> {</div><div>   digitalWrite(<span class="n">9</span>, LOW);</div><div>  }</div><div>    <span class="k">if</span>(input == <span class="n">4</span>) {</div><div>    digitalWrite(<span class="n">10</span>, HIGH);</div><div>      delay(<span class="n">250</span>);</div><div>    digitalWrite(<span class="n">10</span>, LOW);</div><div>      delay(<span class="n">250</span>);</div><div>  }</div><div>&nbsp;</div><div>&nbsp;</div><div>}</div><div>&nbsp;</div></pre>
  </div>
</div>
</body></html>
